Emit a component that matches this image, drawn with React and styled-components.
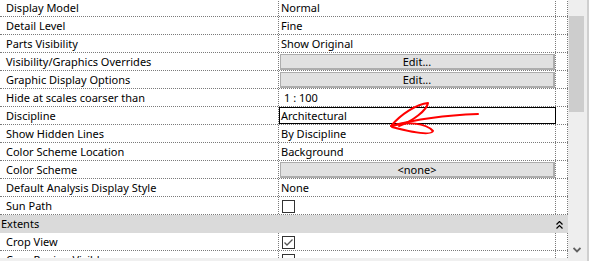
import React from "react";
import styled, { createGlobalStyle } from "styled-components";

const GlobalStyle = createGlobalStyle`
  html, body {
    margin: 0;
    padding: 0;
    background: #fff;
    overflow: hidden;
  }
  body {
    font-family: "Noto Sans", "Open Sans", sans-serif;
    font-size: 11px;
    color: #000;
  }
`;

const rows = [
  { label: "Display Model", value: "Normal" },
  { label: "Detail Level", value: "Fine" },
  { label: "Parts Visibility", value: "Show Original" },
  { label: "Visibility/Graphics Overrides", button: "Edit..." },
  { label: "Graphic Display Options", button: "Edit..." },
  { label: "Hide at scales coarser than", value: "1 : 100", indent: true },
  { label: "Discipline", value: "Architectural", editing: true },
  { label: "Show Hidden Lines", value: "By Discipline" },
  { label: "Color Scheme Location", value: "Background" },
  { label: "Color Scheme", button: "<none>" },
  { label: "Default Analysis Display Style", value: "None" },
  { label: "Sun Path", check: false },
  { group: "Extents" },
  { label: "Crop View", check: true },
  { label: "Crop Region Visible", check: false },
];

const App = () => {
  return (
    <Screen>
      <GlobalStyle />
      <Panel>
        <Grid>
          {rows.map((r, i) =>
            r.group ? (
              <GroupRow key={i}>
                <GroupTitle>{r.group}</GroupTitle>
                <Expander>
                  <svg width="7" height="8" viewBox="0 0 7 8">
                    <path d="M0.5 3.5 L3.5 0.5 L6.5 3.5 M0.5 7.5 L3.5 4.5 L6.5 7.5" fill="none" stroke="#000" strokeWidth="1.2" />
                  </svg>
                </Expander>
              </GroupRow>
            ) : (
              <Row key={i}>
                <Label>{r.label}</Label>
                <Value editing={r.editing} indent={r.indent}>
                  {r.button && <CellButton>{r.button}</CellButton>}
                  {r.value}
                  {r.check !== undefined && (
                    <Check>
                      {r.check && (
                        <svg width="11" height="11" viewBox="0 0 11 11">
                          <path d="M1.5 5.5 L4 8 L9.5 2.5" fill="none" stroke="#555" strokeWidth="1.3" />
                        </svg>
                      )}
                    </Check>
                  )}
                </Value>
                <Spare />
              </Row>
            )
          )}
        </Grid>
        <Footer />
      </Panel>
      <Scrollbar>
        <Thumb />
        <DownArrow>
          <svg width="8" height="6" viewBox="0 0 8 6">
            <path d="M0.5 1 L4 4.5 L7.5 1" fill="none" stroke="#606060" strokeWidth="1.8" />
          </svg>
        </DownArrow>
      </Scrollbar>
      <Blank />
      <Arrow width="100" height="40" viewBox="385 98 100 40">
        <g fill="none" stroke="#f00" strokeWidth="2" strokeLinecap="round" strokeLinejoin="round">
          <path d="M478 114 C 450 115, 420 118, 391 126" />
          <path d="M391 126 C 401 114, 417 104, 428 103 C 427 110, 413 121, 399 126" />
          <path d="M392 126 C 406 121, 426 123, 433 131 C 431 136, 411 132, 392 127" />
        </g>
      </Arrow>
    </Screen>
  );
};

const Screen = styled.div`
  position: relative;
  display: flex;
  width: 606px;
  height: 261px;
  overflow: hidden;
`;

const Panel = styled.div`
  width: 568px;
  display: flex;
  flex-direction: column;
`;

const Grid = styled.div`
  height: 258px;
  overflow: hidden;
  display: flex;
  flex-direction: column;
  & > :first-child {
    margin-top: -1px;
  }
`;

const Footer = styled.div`
  flex: 1;
  background: #f0f0f0;
`;

const Row = styled.div`
  flex: none;
  display: grid;
  grid-template-columns: 279px 277px 12px;
  height: 18px;
  box-sizing: border-box;
  border-bottom: 1px dotted #7a7a7a;
`;

const Label = styled.div`
  box-sizing: border-box;
  border-right: 1px dotted #7a7a7a;
  padding-left: 6px;
  line-height: 17px;
  white-space: nowrap;
  overflow: hidden;
`;

const Value = styled.div`
  box-sizing: border-box;
  border-right: 1px dotted #7a7a7a;
  padding-left: ${(p) => (p.indent ? "5px" : "2px")};
  line-height: 17px;
  white-space: nowrap;
  display: flex;
  align-items: flex-start;
  outline: ${(p) => (p.editing ? "1px solid #000" : "none")};
  outline-offset: -1px;
`;

const Spare = styled.div`
  box-sizing: border-box;
  border-right: 1px dotted #7a7a7a;
`;

const CellButton = styled.div`
  box-sizing: border-box;
  margin: 1px 0 0 -1px;
  width: 275px;
  height: 16px;
  background: #e1e1e1;
  border: 1px solid #adadad;
  border-right-width: 2px;
  border-bottom-width: 2px;
  text-align: center;
  line-height: 13px;
`;

const Check = styled.div`
  box-sizing: border-box;
  margin: 3px 0 0 1px;
  width: 13px;
  height: 13px;
  border: 1px solid #333;
  display: flex;
  align-items: center;
  justify-content: center;
`;

const GroupRow = styled.div`
  flex: none;
  height: 18px;
  background: #dadada;
  display: flex;
  align-items: center;
  justify-content: space-between;
`;

const GroupTitle = styled.div`
  padding-left: 1px;
  line-height: 18px;
`;

const Expander = styled.div`
  width: 12px;
  display: flex;
  justify-content: flex-start;
  padding-top: 1px;
`;

const Scrollbar = styled.div`
  position: relative;
  width: 19px;
  background: #eeeeee;
  border-right: 2px solid #cfcfcf;
  display: flex;
  flex-direction: column;
  align-items: flex-start;
`;

const Thumb = styled.div`
  margin: 16px 0 0 1px;
  width: 15px;
  height: 96px;
  background: #cdcdcd;
`;

const DownArrow = styled.div`
  margin-top: auto;
  margin-bottom: 8px;
  margin-left: 5px;
  display: flex;
`;

const Blank = styled.div`
  flex: 1;
  background: #fff;
`;

const Arrow = styled.svg`
  position: absolute;
  left: 385px;
  top: 98px;
  pointer-events: none;
`;

export default App;
